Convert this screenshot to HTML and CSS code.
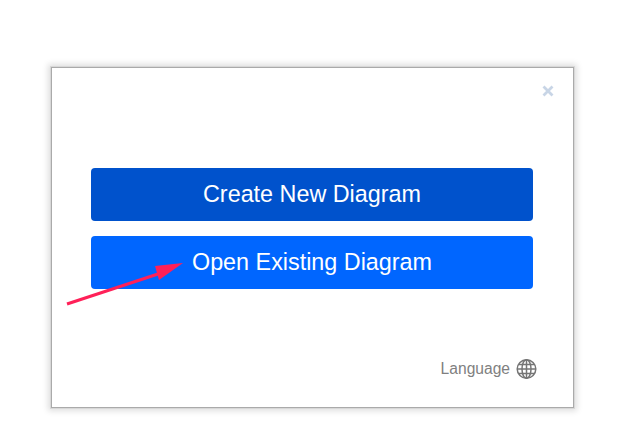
FILE: index.html
```html
<!DOCTYPE html>
<html lang="en">
<head>
	<meta charset="UTF-8">
	<title>Create or Open Diagram</title>
	<link rel="stylesheet" href="styles.css">
</head>
<body>

<div class="dialog">
	<div class="close-row">
		<svg class="close-icon" width="12" height="12" viewBox="0 0 12 12" aria-label="Close">
			<path d="M1.5 1.5 L10.5 10.5 M10.5 1.5 L1.5 10.5"/>
		</svg>
	</div>
	<div class="actions">
		<button class="action action-create">Create New Diagram</button>
		<button class="action action-open">Open Existing Diagram</button>
	</div>
	<div class="language">
		<span class="language-label">Language</span>
		<svg class="globe" width="22" height="22" viewBox="0 0 22 22">
			<circle cx="10.5" cy="11" r="9.3"/>
			<ellipse cx="10.5" cy="11" rx="4.5" ry="9.3"/>
			<path d="M10.5 1.7 V20.3 M1.2 11 H19.8 M2.8 6.5 H18.2 M2.8 15.5 H18.2"/>
		</svg>
	</div>

	<!-- annotation arrow, sits over the open button -->
	<svg class="arrow" width="120" height="50" viewBox="0 0 120 50">
		<path class="arrow-line" d="M1 45 L92 15"/>
		<path class="arrow-head" d="M117 4 L89 7 L93 21 Z"/>
	</svg>
</div>

</body>
</html>
```

FILE: styles.css
```css
body {
	box-sizing: border-box;
	min-height: 437px;
	margin: 0;
	padding: 67px 0 0 51px;
	background: #fff;
	font-family: "Liberation Sans", Helvetica, Arial, sans-serif;
}

.dialog {
	box-sizing: border-box;
	position: relative;
	width: 523px;
	height: 341px;
	background: #fff;
	border: 1px solid #aaa;
	box-shadow: 0 0 0 1px #d8d8d8, 0 0 6px 3px rgba(0,0,0,0.13);
}

.close-row {
	display: flex;
	justify-content: flex-end;
	padding: 17px 19px 0 0;
	height: 83px;
}

.close-icon {
	stroke: #c8d5e6;
	stroke-width: 2.8;
	fill: none;
}

.actions {
	display: flex;
	flex-direction: column;
	gap: 15px;
	padding: 0 40px 0 39px;
}

.action {
	height: 53px;
	border: 0;
	border-radius: 4px;
	color: #fff;
	font-family: inherit;
	font-size: 23.35px;
	padding: 0;
}

.action-create {
	background: #0052cc;
}

.action-open {
	background: #0066ff;
}

.language {
	display: flex;
	justify-content: flex-end;
	align-items: center;
	gap: 6px;
	padding: 69px 35px 0 0;
	color: #808080;
	font-size: 15.6px;
}

.globe {
	fill: none;
	stroke: #757575;
	stroke-width: 1.5;
}

.arrow {
	position: absolute;
	left: 14px;
	top: 191px;
}

.arrow-line {
	stroke: #ff2058;
	stroke-width: 3.2;
	fill: none;
}

.arrow-head {
	fill: #ff2058;
}
```
